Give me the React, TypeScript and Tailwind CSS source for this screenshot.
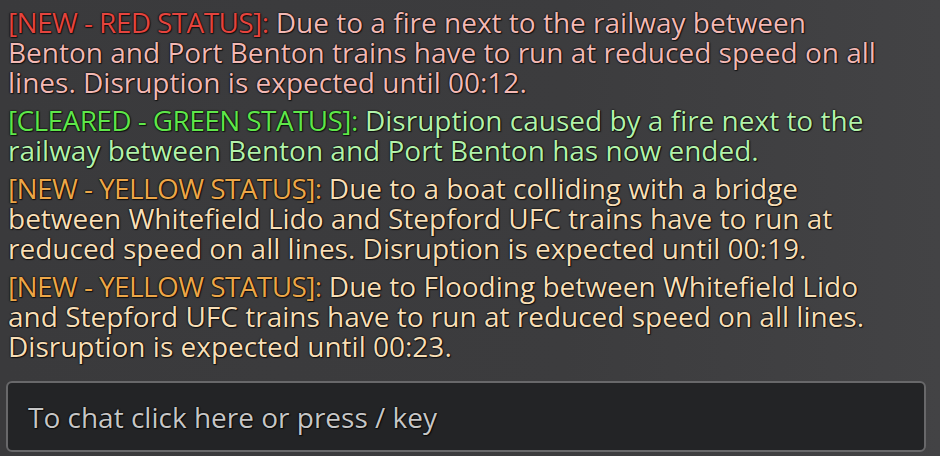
import React from "react";

export default function App() {
  const shadow = "[text-shadow:0_0_1px_#000,0_0_2px_#000,1px_1px_1px_rgba(0,0,0,0.6)]";
  const tag = "tracking-[-0.6px]";
  return (
    <div
      className="w-[940px] h-[456px] overflow-hidden bg-[linear-gradient(90deg,#3a3a3c_0%,#3c3c3e_60%,#434345_100%)] pl-[8px] pr-[8px] pt-[7px]"
      style={{ fontFamily: '"Open Sans", "Noto Sans", sans-serif' }}
    >
      <div className={`text-[28px] leading-[30px] tracking-[0px] ${shadow} whitespace-nowrap`}>
        <p className="text-[#f2b8b4]">
          <span className={`text-[#e4443e] ${tag}`}>[NEW - RED STATUS]:</span> Due to a fire next to the railway between
          <br />
          Benton and Port Benton trains have to run at reduced speed on all
          <br />
          lines. Disruption is expected until 00:12.
        </p>
        <p className="mt-[8px] text-[#b2f2aa]">
          <span className={`text-[#5fe64a] ${tag}`}>[CLEARED - GREEN STATUS]:</span> Disruption caused by a fire next to the
          <br />
          railway between Benton and Port Benton has now ended.
        </p>
        <p className="mt-[8px] text-[#f7deb6]">
          <span className={`text-[#eca648] ${tag}`}>[NEW - YELLOW STATUS]:</span> Due to a boat colliding with a bridge
          <br />
          between Whitefield Lido and Stepford UFC trains have to run at
          <br />
          reduced speed on all lines. Disruption is expected until 00:19.
        </p>
        <p className="mt-[8px] text-[#f7deb6]">
          <span className={`text-[#eca648] ${tag}`}>[NEW - YELLOW STATUS]:</span> Due to Flooding between Whitefield Lido
          <br />
          and Stepford UFC trains have to run at reduced speed on all lines.
          <br />
          Disruption is expected until 00:23.
        </p>
      </div>
      <div className="ml-[-2px] mt-[20px] flex h-[71px] w-[920px] items-center rounded-[6px] border-2 border-[#68686a] bg-[#232426] pl-[20px]">
        <span className={`text-[28px] tracking-[0px] text-[#c6c6c6] ${shadow}`}>To chat click here or press / key</span>
      </div>
    </div>
  );
}
